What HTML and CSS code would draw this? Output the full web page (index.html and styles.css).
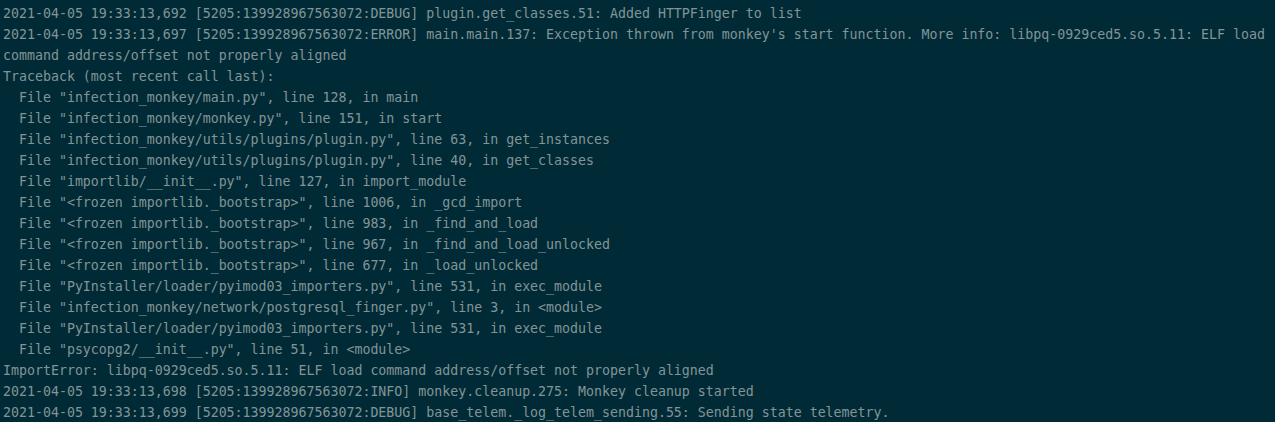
FILE: index.html
```html
<!DOCTYPE html>
<html lang="en">
<head>
<meta charset="utf-8">
<title>Terminal log</title>
<link rel="stylesheet" href="styles.css">
</head>
<body>
<main class="terminal">
<pre class="log">2021-04-05 19:33:13,692 [5205:139928967563072:DEBUG] plugin.get_classes.51: Added HTTPFinger to list
2021-04-05 19:33:13,697 [5205:139928967563072:ERROR] main.main.137: Exception thrown from monkey's start function. More info: libpq-0929ced5.so.5.11: ELF load
command address/offset not properly aligned
Traceback (most recent call last):
  File "infection_monkey/main.py", line 128, in main
  File "infection_monkey/monkey.py", line 151, in start
  File "infection_monkey/utils/plugins/plugin.py", line 63, in get_instances
  File "infection_monkey/utils/plugins/plugin.py", line 40, in get_classes
  File "importlib/__init__.py", line 127, in import_module
  File "&lt;frozen importlib._bootstrap&gt;", line 1006, in _gcd_import
  File "&lt;frozen importlib._bootstrap&gt;", line 983, in _find_and_load
  File "&lt;frozen importlib._bootstrap&gt;", line 967, in _find_and_load_unlocked
  File "&lt;frozen importlib._bootstrap&gt;", line 677, in _load_unlocked
  File "PyInstaller/loader/pyimod03_importers.py", line 531, in exec_module
  File "infection_monkey/network/postgresql_finger.py", line 3, in &lt;module&gt;
  File "PyInstaller/loader/pyimod03_importers.py", line 531, in exec_module
  File "psycopg2/__init__.py", line 51, in &lt;module&gt;
ImportError: libpq-0929ced5.so.5.11: ELF load command address/offset not properly aligned
2021-04-05 19:33:13,698 [5205:139928967563072:INFO] monkey.cleanup.275: Monkey cleanup started
2021-04-05 19:33:13,699 [5205:139928967563072:DEBUG] base_telem._log_telem_sending.55: Sending state telemetry.</pre>
</main>
</body>
</html>
```

FILE: styles.css
```css
html, body {
  margin: 0;
  padding: 0;
  background: #002b36;
  height: 100%;
  overflow: hidden;
}

.terminal {
  padding: 3px 3px 0 3px;
}

.log {
  margin: 0;
  font-family: "DejaVu Sans Mono", "Liberation Mono", monospace;
  font-size: 13.28px;
  line-height: 21px;
  color: #839496;
  white-space: pre;
}
```
